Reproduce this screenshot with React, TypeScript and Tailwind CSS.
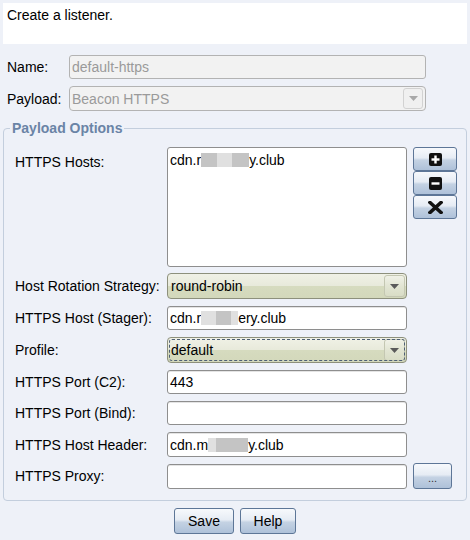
import React from "react";

const btnGrad =
  "bg-[linear-gradient(to_bottom,#f7f9fc_0%,#e6ecf4_45%,#c4d2e3_55%,#aec1d9_100%)] border border-[#5d7697] rounded-[3px]";
const comboGrad =
  "bg-[linear-gradient(to_bottom,#f0f1e6_0%,#e8eadb_48%,#d6dbbf_52%,#d3d8bb_100%)]";

function Field({ children, h = 24, disabled = false }: { children?: React.ReactNode; h?: number; disabled?: boolean }) {
  return (
    <div
      className={`w-full ${h === 25 ? "h-[25px]" : "h-[24px]"} flex items-center pl-[2px] rounded-[3px] border ${
        disabled ? "bg-[#f2f2f2] border-[#b3b3b3] text-[#9a9a9a]" : "bg-white border-[#8e8e8e] shadow-[inset_0_1px_0_#e4e4e4]"
      } whitespace-nowrap overflow-hidden`}
    >
      {children}
    </div>
  );
}

function Arrow({ color = "#555" }: { color?: string }) {
  return (
    <svg width="9" height="5" viewBox="0 0 9 5">
      <path d="M0 0 H9 L4.5 5 Z" fill={color} />
    </svg>
  );
}

function Combo({ text, focused = false }: { text: string; focused?: boolean }) {
  return (
    <div className={`relative w-full h-[26px] rounded-[4px] border border-[#8d907c] ${comboGrad} flex items-center`}>
      {focused && (
        <div className="absolute inset-[1px] rounded-[3px] border border-dashed border-[#4d5f75]" />
      )}
      <span className="pl-[3px] flex-1">{text}</span>
      <div className="w-[21px] h-[22px] mr-[1px] rounded-[3px] border border-[#c4c7b2] bg-[linear-gradient(to_bottom,#f0f1e7,#e2e5d3_50%,#d9ddc6)] flex items-center justify-center">
        <Arrow color="#5a5a5a" />
      </div>
    </div>
  );
}

function Blur({ w, light = false }: { w: number; light?: boolean }) {
  return (
    <span
      className={`inline-block h-[14px] align-[-2px] ${light ? "bg-[#e0e0e0]" : "bg-[#c4c4c4]"}`}
      style={{ width: w }}
    />
  );
}

function Row({ label, children, mt, h }: { label: string; children: React.ReactNode; mt: string; h: string }) {
  return (
    <div className={`flex items-center ${mt} ${h}`}>
      <div className="w-[163px] pl-[11px] shrink-0 whitespace-nowrap">{label}</div>
      <div className="w-[240px] shrink-0">{children}</div>
    </div>
  );
}

export default function App() {
  return (
    <div className="w-[470px] h-[540px] bg-[#eef1f8] font-['Liberation_Sans',Arial,sans-serif] text-[14px] leading-[16px] text-black pt-[3px] px-[3px] overflow-hidden">
      <div className="h-[41px] bg-white pl-[4px] pt-[4px]">Create a listener.</div>

      <div className="flex items-center mt-[11px] h-[24px]">
        <div className="w-[66px] pl-[4px]">Name:</div>
        <div className="w-[357px]">
          <Field disabled>default-https</Field>
        </div>
      </div>

      <div className="flex items-center mt-[7px] h-[25px]">
        <div className="w-[66px] pl-[4px]">Payload:</div>
        <div className="w-[357px] h-[25px] rounded-[4px] border border-[#b3b3b3] bg-[#f2f2f2] text-[#9a9a9a] flex items-center">
          <span className="pl-[2px] flex-1">Beacon HTTPS</span>
          <div className="w-[20px] h-[21px] mr-[2px] rounded-[3px] border border-[#d2d2d2] bg-[#f0f0f0] flex items-center justify-center">
            <Arrow color="#a8a8a8" />
          </div>
        </div>
      </div>

      <div className="relative mt-[17px] h-[373px] border border-[#c3cedd] rounded-[4px] pt-[18px]">
        <span className="absolute -top-[9px] left-[6px] px-[2px] bg-[#eef1f8] font-bold text-[#6a84a6] leading-[16px]">
          Payload Options
        </span>

        <div className="flex items-start h-[120px]">
          <div className="w-[163px] pl-[11px] pt-[7px] shrink-0">HTTPS Hosts:</div>
          <div className="w-[240px] h-[120px] shrink-0 bg-white border border-[#8e8e8e] rounded-[3px] pl-[2px] pt-[4px] whitespace-nowrap">
            cdn.r<Blur w={16} /><Blur w={15} light /><Blur w={17} />y.club
          </div>
          <div className="ml-[6px] flex flex-col w-[44px]">
            <div className={`h-[24px] ${btnGrad} flex items-center justify-center`}>
              <svg width="13" height="13" viewBox="0 0 13 13">
                <rect x="0" y="0" width="13" height="13" rx="2" fill="#111" />
                <rect x="5.3" y="2.5" width="2.4" height="8" fill="#fff" />
                <rect x="2.5" y="5.3" width="8" height="2.4" fill="#fff" />
              </svg>
            </div>
            <div className={`h-[24px] ${btnGrad} flex items-center justify-center`}>
              <svg width="13" height="13" viewBox="0 0 13 13">
                <rect x="0" y="0" width="13" height="13" rx="2" fill="#111" />
                <rect x="2.5" y="5.3" width="8" height="2.4" fill="#fff" />
              </svg>
            </div>
            <div className={`h-[24px] ${btnGrad} flex items-center justify-center`}>
              <svg width="15" height="13" viewBox="0 0 15 13">
                <path d="M2 1.5 L13 11.5 M13 1.5 L2 11.5" stroke="#111" strokeWidth="3.6" strokeLinecap="square" />
              </svg>
            </div>
          </div>
        </div>

        <Row label="Host Rotation Strategy:" mt="mt-[6px]" h="h-[26px]">
          <Combo text="round-robin" />
        </Row>
        <Row label="HTTPS Host (Stager):" mt="mt-[7px]" h="h-[24px]">
          <Field>
            cdn.r<Blur w={15} light /><Blur w={15} /><Blur w={7} light />ery.club
          </Field>
        </Row>
        <Row label="Profile:" mt="mt-[7px]" h="h-[26px]">
          <Combo text="default" focused />
        </Row>
        <Row label="HTTPS Port (C2):" mt="mt-[7px]" h="h-[24px]">
          <Field>443</Field>
        </Row>
        <Row label="HTTPS Port (Bind):" mt="mt-[7px]" h="h-[24px]">
          <Field />
        </Row>
        <Row label="HTTPS Host Header:" mt="mt-[7px]" h="h-[25px]">
          <Field h={25}>
            cdn.m<Blur w={8} light /><Blur w={32} />y.club
          </Field>
        </Row>
        <div className="flex items-center mt-[6px] h-[26px]">
          <div className="w-[163px] pl-[11px] shrink-0">HTTPS Proxy:</div>
          <div className="w-[240px] shrink-0">
            <Field h={25} />
          </div>
          <div className={`ml-[6px] w-[39px] h-[26px] ${btnGrad} flex items-end justify-center pb-[4px] text-[11px] leading-[11px] text-[#333]`}>
            ...
          </div>
        </div>
      </div>

      <div className="flex justify-center gap-[6px] mt-[7px]">
        <div className={`w-[60px] h-[26px] ${btnGrad} flex items-center justify-center`}>Save</div>
        <div className={`w-[56px] h-[26px] ${btnGrad} flex items-center justify-center`}>Help</div>
      </div>
    </div>
  );
}
